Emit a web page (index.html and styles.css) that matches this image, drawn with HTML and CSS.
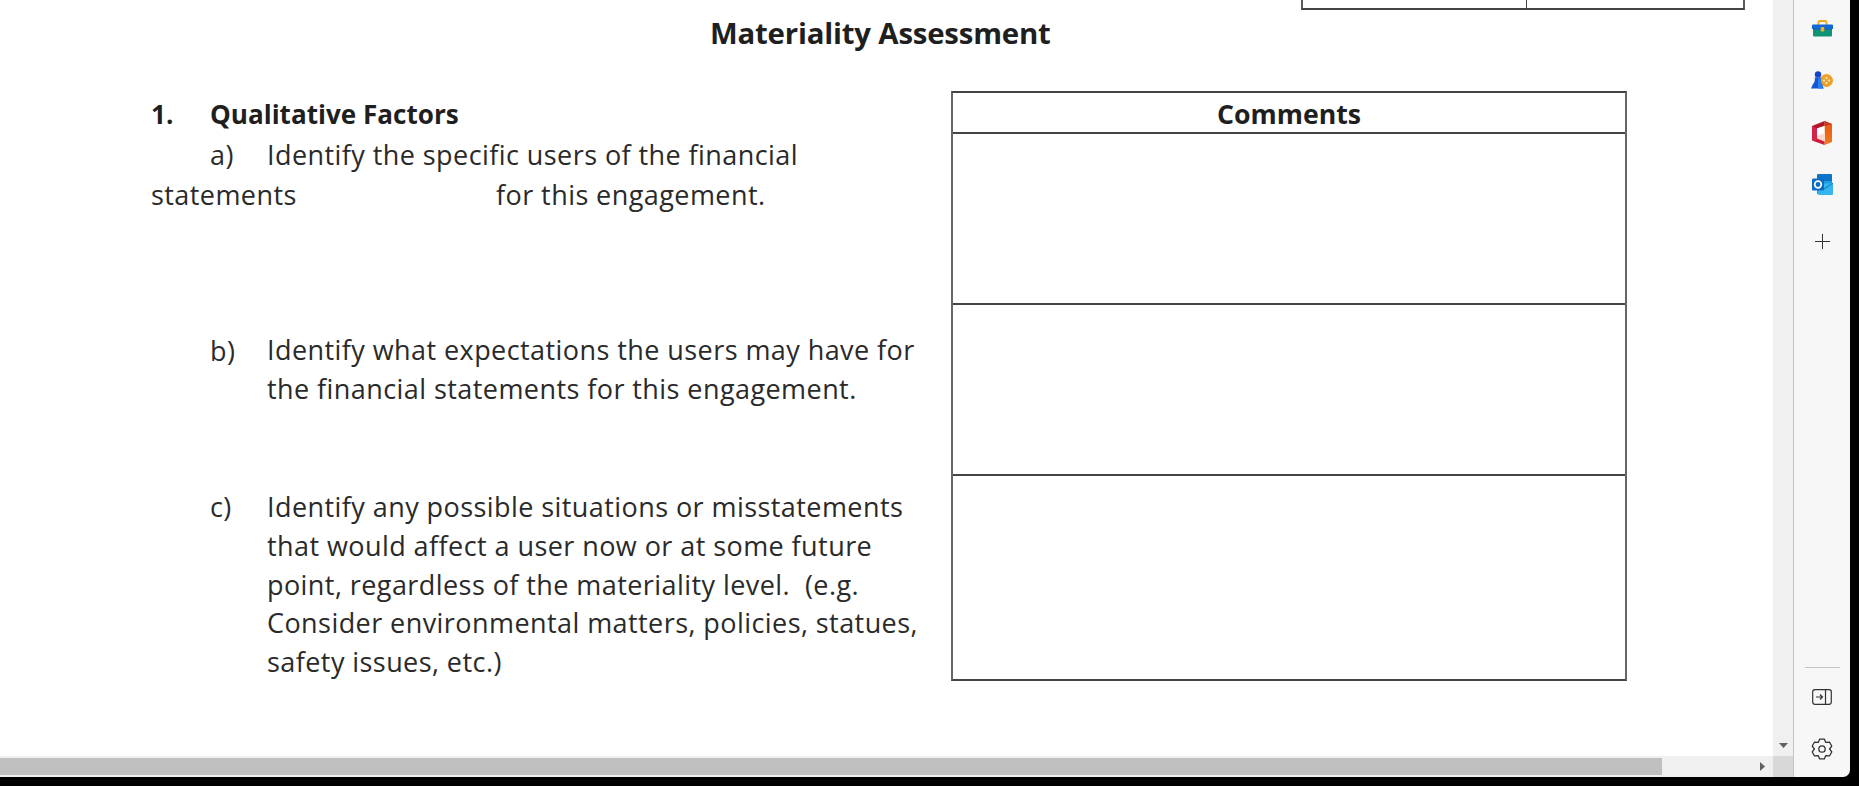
FILE: index.html
```html
<!DOCTYPE html>
<html lang="en">
<head>
<meta charset="utf-8">
<title>Materiality Assessment</title>
<link rel="stylesheet" href="styles.css">
</head>
<body>
<div class="app">
  <div class="viewer">
    <div class="viewport">
      <main class="page">
        <div class="top-table"><div class="top-cell"></div><div class="top-cell"></div></div>
        <h1 class="title">Materiality Assessment</h1>
        <div class="content">
          <section class="questions">
            <h2 class="heading"><span class="num">1.</span><span>Qualitative Factors</span></h2>
            <div class="q-a">
              <p class="q-a-first"><span class="mark">a)</span><span>Identify the specific users of the financial</span></p>
              <p class="q-a-second"><span class="gap-word">statements</span><span>for this engagement.</span></p>
            </div>
            <div class="q q-b">
              <span class="mark">b)</span>
              <p class="q-text">Identify what expectations the users may have for<br>the financial statements for this engagement.</p>
            </div>
            <div class="q q-c">
              <span class="mark">c)</span>
              <p class="q-text">Identify any possible situations or misstatements<br>that would affect a user now or at some future<br>point, regardless of the materiality level.&nbsp; (e.g.<br>Consider environmental matters, policies, statues,<br>safety issues, etc.)</p>
            </div>
          </section>
          <section class="comments">
            <div class="c-head">Comments</div>
            <div class="c-row r1"></div>
            <div class="c-row r2"></div>
            <div class="c-row r3"></div>
          </section>
        </div>
      </main>
      <div class="vbar">
        <svg class="arrow-down" viewBox="0 0 9 5" width="9" height="5"><path d="M0 0h9L4.500 5z" fill="#606060"/></svg>
      </div>
    </div>
    <div class="hbar">
      <div class="hthumb"></div>
      <svg class="arrow-right" viewBox="0 0 5 9" width="5" height="9"><path d="M0 0v9l5-4.500z" fill="#606060"/></svg>
      <div class="corner"></div>
    </div>
  </div>
  <aside class="sidebar">
    <div class="side-icons">
      <svg class="ic ic1" viewBox="0 0 21 17" width="21" height="17">
        <path d="M6.500 5V2.500Q6.500 1 8 1h5q1.500 0 1.500 1.500V5" fill="none" stroke="#eda920" stroke-width="1.800"/>
        <path d="M1 4.500h19q1 0 1 1V9H0V5.500q0-1 1-1z" fill="#1368d6"/>
        <path d="M1 9h19v6.500q0 1-1 1H2q-1 0-1-1z" fill="#0f9374"/>
        <rect x="1" y="8.500" width="19" height="1.500" fill="#0d6fb0"/>
        <rect x="8.700" y="7" width="3.600" height="4.500" rx="1" fill="#f3b01c"/>
      </svg>
      <svg class="ic ic2" viewBox="0 0 22 18" width="22" height="18">
        <circle cx="15.500" cy="9.500" r="6.500" fill="#eda02a"/>
        <circle cx="15.500" cy="7" r="1" fill="#fff3d0"/><circle cx="15.500" cy="12" r="1" fill="#fff3d0"/>
        <circle cx="13" cy="9.500" r="1" fill="#fff3d0"/><circle cx="18" cy="9.500" r="1" fill="#fff3d0"/>
        <circle cx="7" cy="3.500" r="3.200" fill="#1446c8"/>
        <path d="M3.500 6.500h7l-1 1.500q0 3.500 2 6l1 3.500H0l1.500-3.500q2.500-2.500 2.500-6z" fill="#1555d8"/>
        <path d="M7 7.500h2.500q0 4 2 6.500l1 3.500H7z" fill="#2a7fe8"/>
      </svg>
      <svg class="ic ic3" viewBox="0 0 20 24" width="20" height="24">
        <defs><linearGradient id="off" x1="0" y1="0" x2="0" y2="1"><stop offset="0" stop-color="#e8560f"/><stop offset="1" stop-color="#ee7a1e"/></linearGradient></defs>
        <path d="M12.500 0 20 3v18l-7.500 3z" fill="url(#off)"/>
        <path d="M12.500 0v5L5 7.500v10L0 19.500V5z" fill="#b0182a"/>
        <path d="M5 7.500 12.500 5v15.500L5 17.500z" fill="#fff"/>
        <path d="M5 15 12.500 12v8.500L5 17.500z" fill="#ffd8d0"/>
        <path d="M0 19.500 5 17.500l7.500 3V24z" fill="#d01a3a"/>
        <path d="M0 5 5 7.500v10L0 19.500z" fill="#d8204c"/>
        <path d="M12.500 0v5l7.500-2z" fill="#c8381c"/>
      </svg>
      <svg class="ic ic4" viewBox="0 0 21 21" width="21" height="21">
        <rect x="5" y="0" width="15" height="10" rx="1" fill="#0f74c8"/>
        <rect x="5" y="7" width="15" height="13" fill="#1c9be0"/>
        <path d="M6 10 21 9v11q0 1-1 1H7q-1 0-1-1z" fill="#35b5ee"/>
        <path d="M21 9 12 15l-6-5" fill="none" stroke="#0f74c8" stroke-width="1"/>
        <rect x="0" y="4.500" width="12" height="12" rx="1.200" fill="#0a6cc4"/>
        <circle cx="6" cy="10.500" r="3.300" fill="none" stroke="#fff" stroke-width="1.700"/>
      </svg>
      <svg class="ic ic5" viewBox="0 0 15 15" width="15" height="15"><path d="M7.500 0v15M0 7.500h15" stroke="#333" stroke-width="1" fill="none"/></svg>
    </div>
    <div class="side-bottom">
      <div class="side-rule"></div>
      <svg class="ic ic6" viewBox="0 0 20 16" width="20" height="16">
        <rect x=".7" y=".7" width="18.600" height="14.600" rx="2.200" fill="none" stroke="#333" stroke-width="1.200"/>
        <path d="M13.500 .7v14.600" stroke="#333" stroke-width="1.200"/>
        <path d="M4 8h6.500M8 5.500 10.500 8 8 10.500" stroke="#333" stroke-width="1.200" fill="none"/>
      </svg>
      <svg class="ic ic7" viewBox="0 0 22 22" width="22" height="22">
        <path d="M8.700 1.070H13.300L14.800 4.420 18.460 4.040 20.750 8.020 18.600 11 20.750 13.980 18.460 17.960 14.800 17.580 13.300 20.930H8.700L7.200 17.580 3.540 17.960 1.250 13.980 3.400 11 1.250 8.020 3.540 4.040 7.200 4.420z" fill="none" stroke="#333" stroke-width="1.300" stroke-linejoin="round"/>
        <circle cx="11" cy="11" r="3.200" fill="none" stroke="#333" stroke-width="1.300"/>
      </svg>
    </div>
  </aside>
</div>
</body>
</html>
```
FILE: styles.css
```css
* { box-sizing: border-box; }
html, body { margin: 0; padding: 0; }
body {
  width: 1859px;
  height: 786px;
  overflow: hidden;
  background: #000;
  font-family: "Open Sans", "Liberation Sans", sans-serif;
  color: #2a2a2a;
}
.app {
  display: flex;
  width: 1850px;
  height: 777px;
  border-bottom-right-radius: 7px;
  overflow: hidden;
  background: #f7f7f7;
}
.viewer { display: flex; flex-direction: column; width: 1794px; border-right: 1px solid #c4c4c4; }
.viewport { display: flex; height: 756px; }
.page { width: 1773px; height: 756px; background: #fff; overflow: hidden; }
.vbar { position: relative; width: 20px; background: #f0f0f0; }
.arrow-down { position: absolute; left: 6px; bottom: 8px; }
.hbar { position: relative; display: flex; align-items: center; height: 21px; padding: 2px 0; background: #f0f0f0; }
.hthumb { width: 1662px; height: 17px; background: #c0c0c0; }
.arrow-right { margin-left: 98px; }
.corner { position: absolute; right: 0; top: 0; width: 20px; height: 21px; background: #d8d8d8; }

.top-table {
  display: flex;
  width: 444px;
  height: 10px;
  margin-left: 1301px;
  border: 2px solid #5c5c5c;
  border-top: 0;
  border-bottom-color: #444;
}
.top-cell { width: 224px; border-right: 1px solid #444; }
.top-cell:last-child { flex: 1; border-right: 0; }

.title {
  margin: 8px 0 0 710px;
  font-size: 29.4px;
  line-height: 30px;
  font-weight: 700;
  letter-spacing: -0.2px;
  color: #1f1f1f;
}
.content { display: flex; margin-top: 43px; padding-left: 151px; }
.questions { width: 800px; font-size: 27px; line-height: 39px; letter-spacing: 0.43px; }
.heading {
  display: flex;
  margin: 4px 0 0;
  font-size: 26.1px;
  line-height: 39px;
  font-weight: 700;
  letter-spacing: 0;
  color: #1f1f1f;
}
.num { width: 59px; }
.q-a-first, .q-a-second { display: flex; margin: 0; }
.q-a-first { padding-left: 59px; margin-top: 1px; }
.q-a-second { margin-top: 1px; }
.mark { display: block; width: 57px; flex: none; }
.gap-word { width: 345px; }
.q { display: flex; padding-left: 59px; }
.q-b { margin-top: 117px; }
.q-c { margin-top: 80px; line-height: 38.8px; }
.q-b .q-text { line-height: 38.5px; }
.q-text { margin: 0; white-space: nowrap; }

.comments {
  width: 676px;
  height: 590px;
  border: 2px solid #666;
  border-top-color: #444;
  border-bottom-color: #444;
  display: flex;
  flex-direction: column;
}
.c-head {
  height: 39px;
  font-size: 26.7px;
  line-height: 41px;
  font-weight: 700;
  text-align: center;
  color: #1f1f1f;
}
.c-row { border-top: 2px solid #444; }
.r1 { height: 171px; }
.r2 { height: 171px; }
.r3 { flex: 1; }

.sidebar { position: relative; flex: 1; display: flex; flex-direction: column; justify-content: space-between; align-items: center; }
.side-icons { display: flex; flex-direction: column; align-items: center; padding-top: 20px; }
.ic { display: block; flex: none; }
.ic2 { margin-top: 34px; }
.ic3 { margin-top: 32px; }
.ic4 { margin-top: 29px; }
.ic5 { margin-top: 39px; }
.side-bottom { display: flex; flex-direction: column; align-items: center; padding-bottom: 17px; }
.side-rule { width: 35px; border-top: 1px solid #c4c4c4; }
.ic6 { margin-top: 21px; }
.ic7 { margin-top: 33px; }
```
